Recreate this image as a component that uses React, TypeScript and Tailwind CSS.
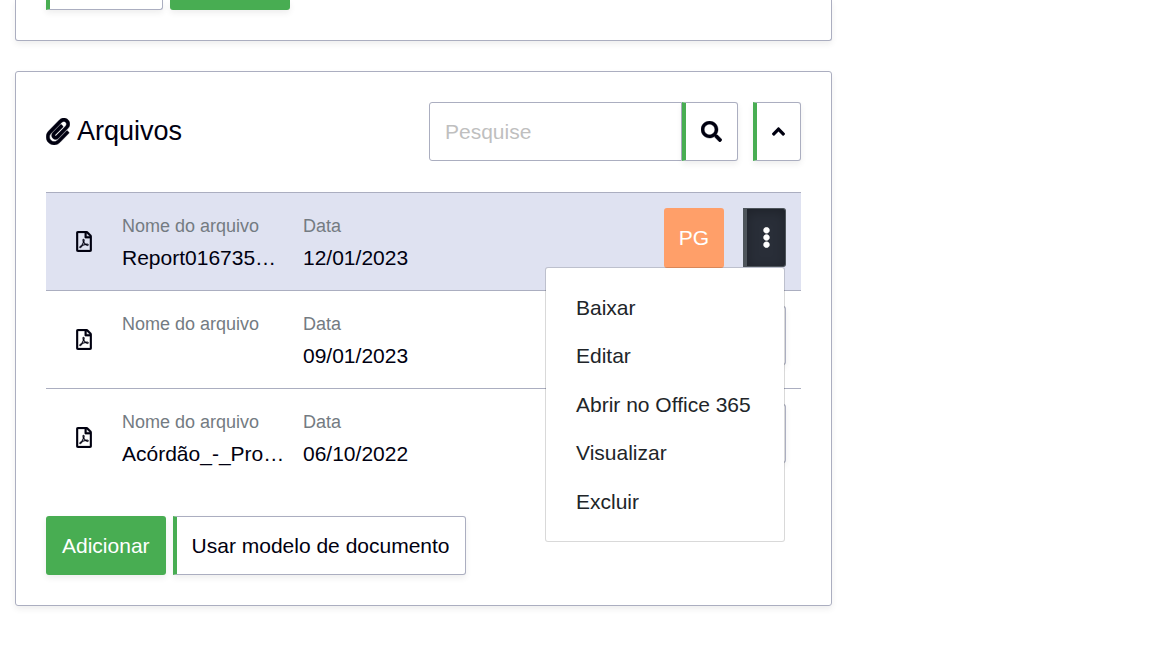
import { useState } from "react";
import {
  FaAngleUp,
  FaEllipsisV,
  FaPaperclip,
  FaRegFilePdf,
  FaSearch,
} from "react-icons/fa";

const files = [
  { id: 1, name: "Report016735…", date: "12/01/2023", owner: "PG" },
  { id: 2, name: "", date: "09/01/2023", owner: "PG" },
  { id: 3, name: "Acórdão_-_Pro…", date: "06/10/2022", owner: "PG" },
];

const actions = ["Baixar", "Editar", "Abrir no Office 365", "Visualizar", "Excluir"];

const outlineButton =
  "flex items-center justify-center rounded-r-[3px] border border-l-4 border-[#abaec0] border-l-[#48ad52] bg-white shadow-[0_3px_6px_rgba(0,0,0,0.07)]";

function ActionsMenu() {
  return (
    <ul
      role="menu"
      className="absolute top-full right-px z-10 grid h-[275px] w-60 auto-rows-fr rounded-[3px] border border-black/15 bg-white bg-clip-padding py-[15px]"
    >
      {actions.map((action) => (
        <li key={action} role="none" className="flex">
          <button
            type="button"
            role="menuitem"
            className="w-full px-[30px] text-left text-[21px] text-[#212529]"
          >
            {action}
          </button>
        </li>
      ))}
    </ul>
  );
}

export default function App() {
  const [openId, setOpenId] = useState<number | null>(1);
  const [search, setSearch] = useState("");

  return (
    <main className="flex flex-col gap-[30px] bg-white pb-10 pl-[15px] pr-80 font-['Liberation_Sans',Arial,sans-serif] text-[21px] text-[#000010]">
      {/* End of the previous card */}
      <section className="rounded-b-[3px] border border-t-0 border-[#abaec0] px-[30px] pb-[30px] shadow-[0_3px_6px_rgba(0,0,0,0.07)]">
        <div className="flex gap-[7px]">
          <button
            type="button"
            aria-label="Cancelar"
            className="h-2.5 w-[117px] rounded-br-[3px] border border-t-0 border-l-4 border-[#abaec0] border-l-[#48ad52] shadow-[0_3px_6px_rgba(0,0,0,0.07)]"
          />
          <button
            type="button"
            aria-label="Salvar"
            className="h-2.5 w-[120px] rounded-b-[3px] bg-[#48ad52] shadow-[0_3px_6px_rgba(0,0,0,0.07)]"
          />
        </div>
      </section>

      <section className="rounded-[3px] border border-[#abaec0] p-[30px] shadow-[0_3px_6px_rgba(0,0,0,0.07)]">
        <header className="flex items-center">
          <h2 className="flex items-center gap-[7px] text-[27px]">
            <FaPaperclip className="h-[27px] w-6 stroke-current stroke-[8px]" />
            Arquivos
          </h2>

          <form className="ml-auto flex h-[59px]" onSubmit={(e) => e.preventDefault()}>
            <input
              type="search"
              aria-label="Pesquise"
              placeholder="Pesquise"
              value={search}
              onChange={(e) => setSearch(e.target.value)}
              className="w-[253px] rounded-l-[3px] border border-[#abaec0] px-[15px] placeholder:text-[#bfbfbf]"
            />
            <button type="submit" aria-label="Pesquisar" className={`w-14 ${outlineButton}`}>
              <FaSearch className="size-[21px] stroke-current stroke-[8px]" />
            </button>
          </form>

          <button
            type="button"
            aria-label="Recolher"
            className={`ml-[15px] h-[59px] w-12 ${outlineButton}`}
          >
            <FaAngleUp className="size-[21px]" />
          </button>
        </header>

        <ul className="mt-[31px]">
          {files.map((file) => {
            const open = file.id === openId;
            return (
              <li
                key={file.id}
                className={`flex h-[98px] items-center border-t border-[#abaec0] pr-[15px] pl-[30px] ${
                  open ? "bg-[#dfe2f1]" : "bg-white"
                }`}
              >
                <FaRegFilePdf className="mr-[30px] h-[21px] w-4 stroke-current stroke-[6px]" />
                <dl className="mr-[18px] w-[163px] leading-8">
                  <dt className="text-lg leading-8 text-[#747b82]">Nome do arquivo</dt>
                  <dd className="h-8 truncate">{file.name}</dd>
                </dl>
                <dl className="leading-8">
                  <dt className="text-lg leading-8 text-[#747b82]">Data</dt>
                  <dd>{file.date}</dd>
                </dl>

                <div className="ml-auto flex items-start gap-[19px] self-start pt-[15px]">
                  <span className="flex size-[60px] items-center justify-center rounded-[3px] bg-[#ff9f69] text-white">
                    {file.owner}
                  </span>
                  <div className="relative">
                    <button
                      type="button"
                      aria-label="Ações"
                      aria-haspopup="menu"
                      aria-expanded={open}
                      onClick={() => setOpenId(open ? null : file.id)}
                      className={
                        open
                          ? "flex h-[59px] w-[43px] items-center justify-center rounded-r-[3px] border border-l-4 border-[#4e555b] bg-[#292e38] text-white shadow-[inset_0_3px_12px_rgba(0,0,0,0.25)]"
                          : `h-[59px] w-[43px] ${outlineButton}`
                      }
                    >
                      <FaEllipsisV className="size-[21px] stroke-current stroke-[12px]" />
                    </button>
                    {open && <ActionsMenu />}
                  </div>
                </div>
              </li>
            );
          })}
        </ul>

        <div className="mt-[30px] flex h-[59px] gap-[7px]">
          <button
            type="button"
            className="rounded-[3px] bg-[#48ad52] px-4 text-white shadow-[0_3px_6px_rgba(0,0,0,0.07)]"
          >
            Adicionar
          </button>
          <button type="button" className={`px-[15px] ${outlineButton}`}>
            Usar modelo de documento
          </button>
        </div>
      </section>
    </main>
  );
}
